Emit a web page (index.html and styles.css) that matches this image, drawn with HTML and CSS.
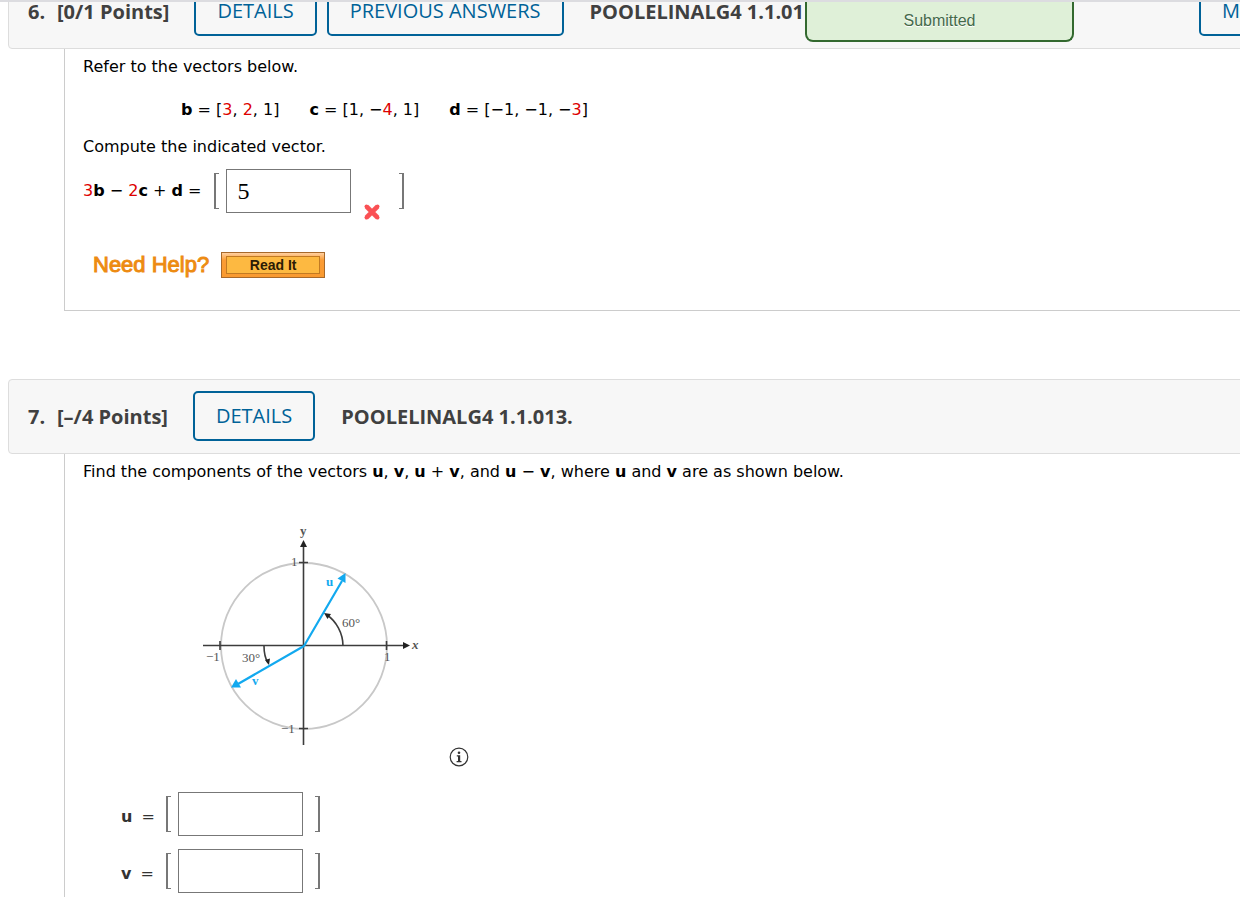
FILE: index.html
```html
<!DOCTYPE html>
<html lang="en">

<head>
    <meta charset="UTF-8">
    <meta name="viewport" content="width=device-width, initial-scale=1.0">
    <title>Vectors</title>
    <link rel="stylesheet" href="styles.css">
</head>

<body>
    <div class="status">Submitted</div>
    <main class="page">
        <!-- question 6 -->
        <section class="question">
            <header class="question-header">
                <span class="number">6.</span>
                <span class="points">[0/1 Points]</span>
                <button class="btn" type="button">DETAILS</button>
                <button class="btn" type="button">PREVIOUS ANSWERS</button>
                <span class="code">POOLELINALG4 1.1.01</span>
                <button class="btn btn-end" type="button">M</button>
            </header>
            <div class="question-body">
                <p>Refer to the vectors below.</p>
                <p class="vectors">
                    <span><b>b</b> = [<i class="rand">3</i>, <i class="rand">2</i>, 1]</span>
                    <span><b>c</b> = [1, −<i class="rand">4</i>, 1]</span>
                    <span><b>d</b> = [−1, −1, −<i class="rand">3</i>]</span>
                </p>
                <p>Compute the indicated vector.</p>
                <div class="expression">
                    <label for="answer"><i class="rand">3</i><b>b</b> − <i class="rand">2</i><b>c</b> + <b>d</b> =</label>
                    <span class="bracket bracket-left"></span>
                    <input class="answer" id="answer" type="text" value="5">
                    <svg class="wrong" viewBox="0 0 18 18" role="img" aria-label="Incorrect">
                        <path d="M3.5 3.5L14.5 14.5M14.5 3.5L3.5 14.5" fill="none" stroke="#fb8585" stroke-width="5" stroke-linecap="butt" />
                        <path d="M3.5 3.5L14.5 14.5M14.5 3.5L3.5 14.5" fill="none" stroke="#fa5054" stroke-width="4" stroke-linecap="round" />
                    </svg>
                    <span class="bracket bracket-right"></span>
                </div>
                <div class="help">
                    <span class="help-title">Need Help?</span>
                    <button class="read-it" type="button"><span>Read It</span></button>
                </div>
            </div>
        </section>

        <!-- question 7 -->
        <section class="question">
            <header class="question-header">
                <span class="number">7.</span>
                <span class="points">[–/4 Points]</span>
                <button class="btn" type="button">DETAILS</button>
                <span class="code">POOLELINALG4 1.1.013.</span>
            </header>
            <div class="question-body">
                <p>Find the components of the vectors <b>u</b>, <b>v</b>, <b>u</b> + <b>v</b>, and <b>u</b> − <b>v</b>, where <b>u</b> and <b>v</b> are as shown below.</p>
                <div class="figure">
                    <svg class="graph" viewBox="-104 -121 220 224" role="img" aria-label="Unit circle with vectors u and v">
                        <circle cx="0" cy="0" r="83" fill="none" stroke="#c8c8c8" stroke-width="1.8" />
                        <!-- axes -->
                        <g stroke="#3c3c3c" stroke-width="1.6" fill="none">
                            <path d="M-101 -0.5H100M-0.5 99V-100M-84 -5V4M82.5 -5V4M-5 -83.5H4M-5 82.5H4" />
                            <path d="M39 0C39 -13 32 -25 23 -31M-40 0C-40 7 -39 12 -36 17" />
                        </g>
                        <g fill="#222">
                            <path d="M106 -0.5L99 -4V3Z" />
                            <path d="M-0.5 -106L-4 -99H3Z" />
                            <path d="M20 -33L27 -32L23.5 -27Z" />
                            <path d="M-35 19L-39 14L-34 12.5Z" />
                        </g>
                        <!-- vectors -->
                        <path d="M0 0L38 -65M0 0L-66 38" stroke="#12a9ef" stroke-width="2.2" fill="none" />
                        <path d="M41.5 -73L41.5 -63L33.5 -67.5Z" fill="#12a9ef" />
                        <path d="M-73 41.5L-68 33L-63 41.5Z" fill="#12a9ef" />
                        <g class="graph-text">
                            <text class="axis" x="-4" y="-111">y</text>
                            <text class="axis var" x="108" y="3">x</text>
                            <text x="-13" y="-80">1</text>
                            <text x="-23" y="87">−1</text>
                            <text x="-98" y="15">−1</text>
                            <text x="80" y="15">1</text>
                            <text x="38" y="-19">60°</text>
                            <text x="-62" y="16">30°</text>
                            <text class="vec" x="22" y="-60">u</text>
                            <text class="vec" x="-52" y="39">v</text>
                        </g>
                    </svg>
                    <svg class="info" viewBox="0 0 20 20" role="img" aria-label="Image description">
                        <circle cx="10" cy="10" r="8.8" fill="none" stroke="#333" stroke-width="1.2" />
                        <path d="M7.8 8.2H11.2V14H12.5V15.2H7.6V14H9V9.4H7.8Z" fill="#333" />
                        <circle cx="10" cy="5.8" r="1.3" fill="#333" />
                    </svg>
                </div>
                <div class="components">
                    <div class="component">
                        <label for="u"><b>u</b> <span>=</span></label>
                        <span class="bracket bracket-left"></span>
                        <input class="answer" id="u" type="text">
                        <span class="bracket bracket-right"></span>
                    </div>
                    <div class="component">
                        <label for="v"><b>v</b> <span>=</span></label>
                        <span class="bracket bracket-left"></span>
                        <input class="answer" id="v" type="text">
                        <span class="bracket bracket-right"></span>
                    </div>
                </div>
            </div>
        </section>
    </main>
</body>

</html>
```
FILE: styles.css
```css
* {
    box-sizing: border-box;
}

html {
    height: 100%;
    overflow: hidden;
}

body {
    height: 100%;
    margin: 0;
    overflow: hidden;
    border-top: 2px solid #dcdce0;
    background: #fff;
    color: #000;
    font-family: Verdana, "DejaVu Sans", sans-serif;
    font-size: 16px;
    line-height: 24px;
}

p {
    margin: 0;
}

/* the page is scrolled a little and runs past the right edge */
.page {
    margin: -28px -24px 0 8px;
}

/******************** status message ***********************/

.status {
    position: absolute;
    top: 2px;
    left: 65%;
    width: 269px;
    height: 40px;
    margin-left: -1px;
    border: 2px solid #33692f;
    border-top: 0;
    border-radius: 0 0 8px 8px;
    background: #dff0d8;
    color: #44694a;
    font-family: "Liberation Sans", Arial, sans-serif;
    line-height: 38px;
    text-align: center;
    text-shadow: 0 1px 0 #fff;
}

/******************** question header ***********************/

.question {
    margin-bottom: 68px;
}

.question-header {
    display: flex;
    align-items: center;
    height: 75px;
    padding: 0 0 0 19px;
    border: 1px solid #ddd;
    border-radius: 4px;
    background: #f7f7f7;
    color: #404040;
    font-family: "Open Sans", sans-serif;
    font-size: 20px;
    font-weight: bold;
    white-space: nowrap;
}

.number {
    width: 29px;
}

.points {
    margin-right: 25px;
}

.btn {
    height: 50px;
    margin: 0 10px 2px 0;
    padding: 0 21px;
    border: 2px solid #006298;
    border-radius: 5px;
    background: #f7f7f7;
    color: #006298;
    font: 20px "Open Sans", sans-serif;
}

.code {
    margin-left: 16px;
}

.btn-end {
    margin-left: auto;
    margin-right: 0;
}

/******************** question body ***********************/

.question-body {
    margin-left: 56px;
    padding: 6px 0 32px 18px;
    border-left: 1px solid #ccc;
    border-bottom: 1px solid #ccc;
}

.rand {
    color: #d00;
    font-style: normal;
}

.vectors {
    display: flex;
    gap: 30px;
    margin: 19px 0 13px 98px;
}

.expression {
    display: flex;
    align-items: center;
    margin-top: 10px;
}

.bracket {
    width: 5px;
    height: 36px;
    border: 2px solid #777;
    border-width: 1px 2px;
}

.bracket-left {
    margin: 0 7px 0 13px;
    border-right: 0;
}

.bracket-right {
    margin-left: 12px;
    border-left: 0;
}

.answer {
    width: 125px;
    height: 44px;
    padding: 0 10px;
    border: 1px solid #777;
    font-family: "Liberation Serif", serif;
    font-size: 24px;
}

.wrong {
    align-self: flex-end;
    width: 18px;
    height: 18px;
    margin: 0 6px -8px 12px;
}

/******************** need help ***********************/

.help {
    display: flex;
    align-items: center;
    gap: 12px;
    margin: 39px 0 0 10px;
}

.help-title {
    color: #ed8b12;
    font-family: "Liberation Sans", Arial, sans-serif;
    font-size: 22px;
    -webkit-text-stroke: 1px #ed8b12;
}

.read-it {
    width: 104px;
    height: 26px;
    padding: 3px 4px;
    border: 1px solid #a8692a;
    background: linear-gradient(#ffd0a0, #fb9c34 30%, #f99a30);
    color: #2b1c05;
    font: bold 14px/16px "Liberation Sans", Arial, sans-serif;
}

.read-it span {
    display: block;
    border: 1px solid #c27a22;
    background: #fdb941;
}

/******************** figure ***********************/

.figure {
    display: flex;
    align-items: flex-end;
    gap: 29px;
    margin: 41px 0 0 117px;
}

.graph {
    width: 220px;
    height: 224px;
    margin-bottom: 18px;
}

.graph-text {
    fill: #555;
    font-family: "Liberation Serif", serif;
    font-size: 13px;
}

.graph-text .axis {
    font-weight: bold;
}

.graph-text .var {
    font-style: italic;
}

.graph-text .vec {
    fill: #12a9ef;
    font-weight: bold;
}

.info {
    width: 20px;
    height: 20px;
}

/******************** component answers ***********************/

.components {
    display: grid;
    gap: 13px;
    margin: 25px 0 0 38px;
}

.component {
    display: flex;
    align-items: center;
}

.component label {
    display: flex;
    gap: 9px;
    width: 32px;
    padding-top: 6px;
    color: #333;
}
```
